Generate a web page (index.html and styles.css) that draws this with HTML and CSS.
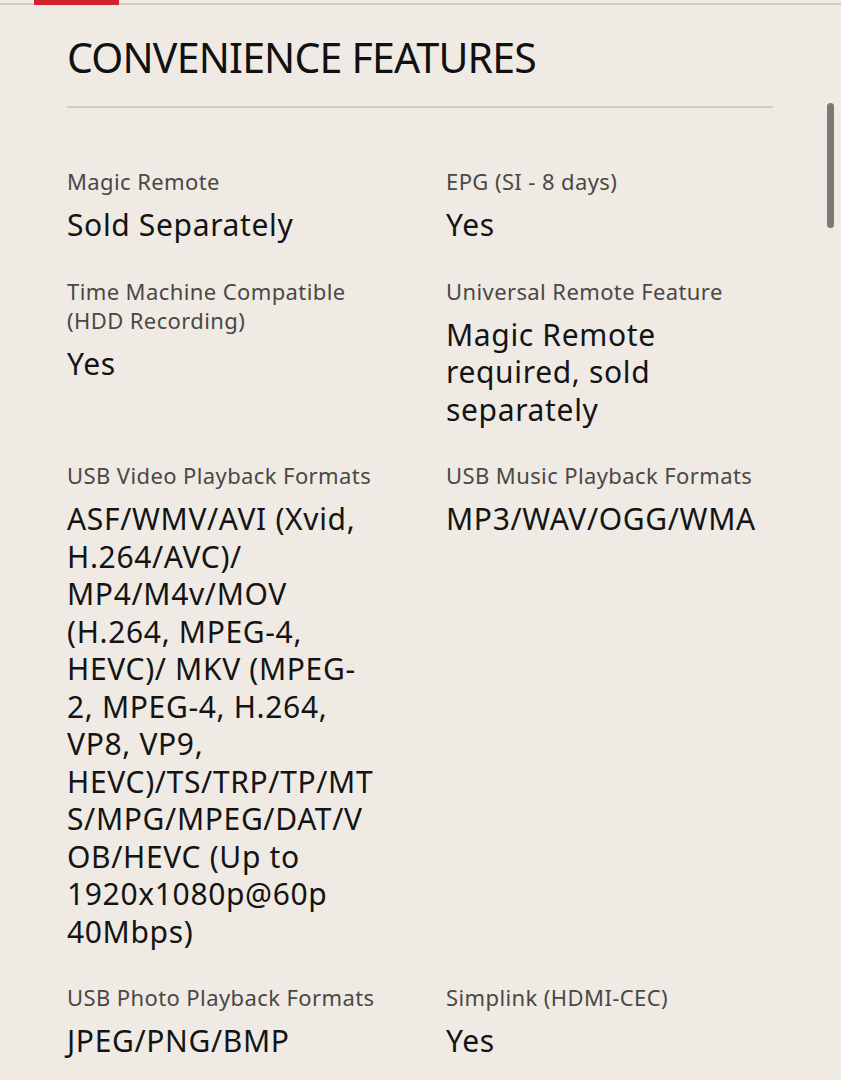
FILE: index.html
```html
<!DOCTYPE html>
<html lang="en">
<head>
<meta charset="utf-8">
<title>Convenience Features</title>
<link rel="stylesheet" href="styles.css">
</head>
<body>
<div class="topbar"><span class="indicator"></span></div>
<main class="content">
  <h2 class="title">CONVENIENCE FEATURES</h2>
  <hr class="divider">
  <dl class="specs">
    <div class="spec">
      <dt class="label">Magic Remote</dt>
      <dd class="value">Sold Separately</dd>
    </div>
    <div class="spec">
      <dt class="label">EPG (SI - 8 days)</dt>
      <dd class="value">Yes</dd>
    </div>
    <div class="spec">
      <dt class="label">Time Machine Compatible (HDD Recording)</dt>
      <dd class="value">Yes</dd>
    </div>
    <div class="spec">
      <dt class="label">Universal Remote Feature</dt>
      <dd class="value">Magic Remote required, sold separately</dd>
    </div>
    <div class="spec">
      <dt class="label">USB Video Playback Formats</dt>
      <dd class="value value-lines">ASF/WMV/AVI (Xvid,<br>H.264/AVC)/<br>MP4/M4v/MOV<br>(H.264, MPEG-4,<br>HEVC)/ MKV (MPEG-<br>2, MPEG-4, H.264,<br>VP8, VP9,<br>HEVC)/TS/TRP/TP/MT<br>S/MPG/MPEG/DAT/V<br>OB/HEVC (Up to<br>1920x1080p@60p<br>40Mbps)</dd>
    </div>
    <div class="spec">
      <dt class="label">USB Music Playback Formats</dt>
      <dd class="value">MP3/WAV/OGG/WMA</dd>
    </div>
    <div class="spec">
      <dt class="label">USB Photo Playback Formats</dt>
      <dd class="value">JPEG/PNG/BMP</dd>
    </div>
    <div class="spec">
      <dt class="label">Simplink (HDMI-CEC)</dt>
      <dd class="value">Yes</dd>
    </div>
  </dl>
</main>
<div class="scrollbar"></div>
</body>
</html>
```
FILE: styles.css
```css
html, body {
  margin: 0;
  padding: 0;
}
body {
  background: #efebe4;
  font-family: "Noto Sans", "Open Sans", sans-serif;
  color: #111111;
  width: 841px;
  height: 1080px;
  overflow: hidden;
  position: relative;
}
.topbar {
  height: 5px;
  position: relative;
  box-sizing: border-box;
  border-bottom: 2px solid #d2cec8;
}
.indicator {
  position: absolute;
  left: 34px;
  top: 0;
  width: 85px;
  height: 5px;
  background: #d0232b;
}
.content {
  padding: 0 68px 0 67px;
}
.title {
  margin: 28px 0 0;
  font-size: 41px;
  line-height: 48px;
  font-weight: 400;
  letter-spacing: -0.8px;
  color: #111111;
}
.divider {
  margin: 25px 0 0;
  border: 0;
  height: 2px;
  background: #cfcbc5;
}
.specs {
  margin: 59px 0 0;
  display: grid;
  grid-template-columns: 330px 327px;
  column-gap: 49px;
  row-gap: 33px;
}
.spec {
  min-width: 0;
}
.label {
  font-size: 22px;
  line-height: 29px;
  letter-spacing: 0.4px;
  color: #4a4845;
}
.value {
  margin: 10px 0 0;
  font-size: 30px;
  line-height: 37.5px;
  letter-spacing: 0.65px;
  color: #141414;
  overflow-wrap: anywhere;
}
.value-lines {
  white-space: nowrap;
}
.scrollbar {
  position: absolute;
  left: 827px;
  top: 103px;
  width: 7px;
  height: 125px;
  border-radius: 4px;
  background: #7b7875;
}
```
